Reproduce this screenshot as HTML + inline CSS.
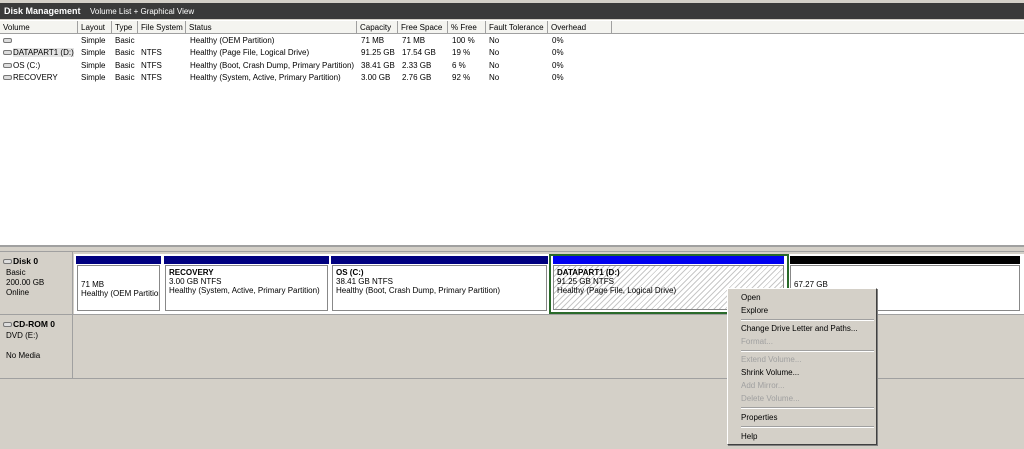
<!DOCTYPE html>
<html><head><style>
*{margin:0;padding:0;box-sizing:border-box}
body{width:1024px;height:449px;overflow:hidden;background:#d4d0c8;font-family:"Liberation Sans",sans-serif;font-size:8px;color:#000;position:relative}
.a{position:absolute;white-space:nowrap}
#title{left:0;top:3px;width:1024px;height:16px;background:#3a3a3a;color:#fff}
#list{left:0;top:20px;width:1024px;height:225px;background:#fff}
.hd{top:21px;height:13px;border-right:1px solid #a0a0a0;border-bottom:1px solid #a0a0a0;background:#f4f4f0;padding:2px 3px;line-height:9px}
.r{line-height:9px}
.ico{display:inline-block;width:9px;height:5px;border:1px solid #777;border-radius:2px;background:#ddd;margin-right:1px;vertical-align:0}
.box{background:#fff;border:1px solid #888;padding:2px 3px;line-height:9px;overflow:hidden}
.bar{height:8px}
.menu div{position:absolute;left:13px;white-space:nowrap}
.dis{color:#a0a0a0}
.sep{position:absolute;left:2px;right:2px;height:2px;border-top:1px solid #a0a0a0;border-bottom:1px solid #fff}
</style></head><body>
<div class="a" id="title"><span style="position:absolute;left:4px;top:3px;font-weight:bold;font-size:9px">Disk Management</span><span style="position:absolute;left:90px;top:4px">Volume List + Graphical View</span></div>
<div class="a" id="list"></div>
<div class="a hd" style="left:0;width:78px">Volume</div>
<div class="a hd" style="left:78px;width:34px">Layout</div>
<div class="a hd" style="left:112px;width:26px">Type</div>
<div class="a hd" style="left:138px;width:48px">File System</div>
<div class="a hd" style="left:186px;width:171px">Status</div>
<div class="a hd" style="left:357px;width:41px">Capacity</div>
<div class="a hd" style="left:398px;width:50px">Free Space</div>
<div class="a hd" style="left:448px;width:38px">% Free</div>
<div class="a hd" style="left:486px;width:62px">Fault Tolerance</div>
<div class="a hd" style="left:548px;width:64px">Overhead</div>
<div class="a hd" style="left:612px;width:412px;border-right:none"></div>

<div class="a r" style="left:3px;top:36px"><span class="ico"></span></div>
<div class="a r" style="left:3px;top:48px"><span class="ico"></span><span style="background:#e4e4e4">DATAPART1 (D:)</span></div>
<div class="a r" style="left:3px;top:61px"><span class="ico"></span>OS (C:)</div>
<div class="a r" style="left:3px;top:73px"><span class="ico"></span>RECOVERY</div>
<div class="a r" style="left:81px;top:36px">Simple</div><div class="a r" style="left:81px;top:48px">Simple</div><div class="a r" style="left:81px;top:61px">Simple</div><div class="a r" style="left:81px;top:73px">Simple</div>
<div class="a r" style="left:115px;top:36px">Basic</div><div class="a r" style="left:115px;top:48px">Basic</div><div class="a r" style="left:115px;top:61px">Basic</div><div class="a r" style="left:115px;top:73px">Basic</div>
<div class="a r" style="left:141px;top:48px">NTFS</div><div class="a r" style="left:141px;top:61px">NTFS</div><div class="a r" style="left:141px;top:73px">NTFS</div>
<div class="a r" style="left:190px;top:36px">Healthy (OEM Partition)</div>
<div class="a r" style="left:190px;top:48px">Healthy (Page File, Logical Drive)</div>
<div class="a r" style="left:190px;top:61px">Healthy (Boot, Crash Dump, Primary Partition)</div>
<div class="a r" style="left:190px;top:73px">Healthy (System, Active, Primary Partition)</div>
<div class="a r" style="left:361px;top:36px">71 MB</div><div class="a r" style="left:361px;top:48px">91.25 GB</div><div class="a r" style="left:361px;top:61px">38.41 GB</div><div class="a r" style="left:361px;top:73px">3.00 GB</div>
<div class="a r" style="left:402px;top:36px">71 MB</div><div class="a r" style="left:402px;top:48px">17.54 GB</div><div class="a r" style="left:402px;top:61px">2.33 GB</div><div class="a r" style="left:402px;top:73px">2.76 GB</div>
<div class="a r" style="left:452px;top:36px">100 %</div><div class="a r" style="left:452px;top:48px">19 %</div><div class="a r" style="left:452px;top:61px">6 %</div><div class="a r" style="left:452px;top:73px">92 %</div>
<div class="a r" style="left:489px;top:36px">No</div><div class="a r" style="left:489px;top:48px">No</div><div class="a r" style="left:489px;top:61px">No</div><div class="a r" style="left:489px;top:73px">No</div>
<div class="a r" style="left:552px;top:36px">0%</div><div class="a r" style="left:552px;top:48px">0%</div><div class="a r" style="left:552px;top:61px">0%</div><div class="a r" style="left:552px;top:73px">0%</div>

<div class="a" style="left:0;top:245px;width:1024px;height:2px;background:#a0a0a0"></div>
<div class="a" style="left:0;top:251px;width:1024px;height:1px;background:#a0a0a0"></div>
<!-- disk 0 -->
<div class="a" style="left:0;top:252px;width:1024px;height:63px;border-bottom:1px solid #a0a0a0"></div>
<div class="a" style="left:72px;top:252px;width:1px;height:127px;background:#a0a0a0"></div>
<div class="a r" style="left:3px;top:257px"><span class="ico"></span><b style="font-size:8.5px">Disk 0</b></div>
<div class="a r" style="left:6px;top:268px;line-height:10px">Basic<br>200.00 GB<br>Online</div>
<div class="a" style="left:74px;top:254px;width:950px;height:60px;background:#fff"></div>

<div class="a bar" style="left:76px;top:256px;width:85px;background:#000080"></div>
<div class="a box" style="left:77px;top:265px;width:83px;height:46px;padding-top:14px">71 MB<br>Healthy (OEM Partition</div>
<div class="a bar" style="left:164px;top:256px;width:165px;background:#000080"></div>
<div class="a box" style="left:165px;top:265px;width:163px;height:46px"><b>RECOVERY</b><br>3.00 GB NTFS<br>Healthy (System, Active, Primary Partition)</div>
<div class="a bar" style="left:331px;top:256px;width:217px;background:#000080"></div>
<div class="a box" style="left:332px;top:265px;width:215px;height:46px"><b>OS (C:)</b><br>38.41 GB NTFS<br>Healthy (Boot, Crash Dump, Primary Partition)</div>
<div class="a" style="left:549px;top:254px;width:240px;height:60px;border:2px solid #2a6a2a;background:#fff"></div>
<div class="a bar" style="left:553px;top:256px;width:231px;background:#0000f0"></div>
<div class="a box" style="left:553px;top:265px;width:231px;height:45px;background:repeating-linear-gradient(135deg,#fff 0 3px,#c8c8c8 3px 4px)"><b>DATAPART1 (D:)</b><br>91.25 GB NTFS<br>Healthy (Page File, Logical Drive)</div>
<div class="a bar" style="left:790px;top:256px;width:230px;background:#000"></div>
<div class="a box" style="left:790px;top:265px;width:230px;height:46px;padding-top:14px">67.27 GB</div>

<!-- cdrom -->
<div class="a" style="left:0;top:378px;width:1024px;height:1px;background:#a0a0a0"></div>
<div class="a r" style="left:3px;top:320px"><span class="ico"></span><b style="font-size:8.5px">CD-ROM 0</b></div>
<div class="a r" style="left:6px;top:331px">DVD (E:)</div>
<div class="a r" style="left:6px;top:351px">No Media</div>

<!-- menu -->
<div class="a menu" style="left:727px;top:288px;width:150px;height:157px;background:#d4d0c8;border:1px solid;border-color:#fff #404040 #404040 #fff;box-shadow:1px 1px 0 #808080">
<div style="top:4px">Open</div>
<div style="top:17px">Explore</div>
<div class="sep" style="top:30px"></div>
<div style="top:35px">Change Drive Letter and Paths...</div>
<div class="dis" style="top:48px">Format...</div>
<div class="sep" style="top:61px"></div>
<div class="dis" style="top:66px">Extend Volume...</div>
<div style="top:79px">Shrink Volume...</div>
<div class="dis" style="top:92px">Add Mirror...</div>
<div class="dis" style="top:105px">Delete Volume...</div>
<div class="sep" style="top:118px"></div>
<div style="top:124px">Properties</div>
<div class="sep" style="top:137px"></div>
<div style="top:143px">Help</div>
</div>
</body></html>
